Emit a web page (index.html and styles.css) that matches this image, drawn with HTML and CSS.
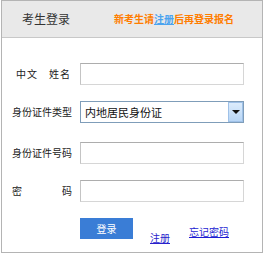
FILE: index.html
```html
<!DOCTYPE html>
<html lang="zh-CN">
<head>
<meta charset="utf-8">
<title>考生登录</title>
<link rel="stylesheet" href="styles.css">
</head>
<body>
<div class="login-box">
  <div class="login-head">
    <span class="login-title">考生登录</span>
    <span class="login-notice">新考生请<a class="notice-link" href="#">注册</a>后再登录报名</span>
  </div>
  <div class="login-form">
    <div class="form-row">
      <label class="form-label label-name">中文　姓名</label>
      <div class="text-input"></div>
    </div>
    <div class="form-row">
      <label class="form-label">身份证件类型</label>
      <div class="select-box">
        <span class="select-text">内地居民身份证</span>
        <span class="select-arrow"><span class="arrow-tri"></span></span>
      </div>
    </div>
    <div class="form-row row-id">
      <label class="form-label">身份证件号码</label>
      <div class="text-input"></div>
    </div>
    <div class="form-row">
      <label class="form-label label-pwd"><span>密</span><span>码</span></label>
      <div class="text-input"></div>
    </div>
    <div class="action-row">
      <button class="login-btn" type="button">登录</button>
      <a class="link link-reg" href="#">注册</a>
      <a class="link link-forget" href="#">忘记密码</a>
    </div>
  </div>
</div>
</body>
</html>
```
FILE: styles.css
```css
* { box-sizing: border-box; }
body {
  margin: 0;
  background: #fff;
  font-family: "Noto Sans CJK SC", "Noto Sans", sans-serif;
}
.login-box {
  margin-left: 1px;
  width: 262px;
  height: 253px;
  border: 1px solid #b4b4b4;
  background: #fff;
}
.login-head {
  height: 37px;
  background: #e9e9e9;
  border-bottom: 1px solid #c8c8c8;
  display: flex;
  align-items: center;
  padding-left: 20px;
}
.login-title {
  font-size: 12px;
  color: #333;
  width: 92px;
  line-height: 14px;
}
.login-notice {
  font-size: 10px;
  line-height: 12px;
  color: #ff7d00;
  font-weight: 700;
}
.notice-link {
  color: #4aa3ef;
  text-decoration: underline;
}
.login-form {
  padding-top: 25px;
  display: flex;
  flex-direction: column;
  gap: 16px;
}
.form-row {
  display: flex;
  align-items: center;
  height: 22px;
}
.row-id { margin-top: 3px; }
.form-label {
  width: 60px;
  margin-left: 10px;
  margin-right: 8px;
  font-size: 10px;
  line-height: 12px;
  color: #222;
  text-align: right;
  white-space: nowrap;
}
.label-name { letter-spacing: 1px; margin-left: 9px; margin-right: 9px; }
.label-pwd {
  display: flex;
  justify-content: space-between;
}
.text-input {
  width: 164px;
  height: 22px;
  border: 1px solid #d6d6d6;
  border-top-color: #adadad;
  border-left-color: #c4c4c4;
  background: #fff;
}
.select-box {
  width: 164px;
  height: 22px;
  border: 1px solid #7f9db9;
  display: flex;
  align-items: center;
  justify-content: space-between;
}
.select-text {
  padding-left: 4px;
  font-size: 11px;
  line-height: 14px;
  color: #111;
}
.select-arrow {
  width: 15px;
  height: 20px;
  border: 1px solid #9fc1e8;
  background: linear-gradient(#dcecfc, #b8d6f6);
  display: flex;
  align-items: center;
  justify-content: center;
}
.arrow-tri {
  width: 0;
  height: 0;
  border-left: 4px solid transparent;
  border-right: 4px solid transparent;
  border-top: 4px solid #111;
}
.action-row {
  display: flex;
  align-items: flex-start;
  padding-left: 78px;
}
.login-btn {
  width: 53px;
  height: 21px;
  border: 0;
  padding: 0;
  background: #3a7dd6;
  color: #fff;
  font-family: inherit;
  font-size: 10px;
  line-height: 12px;
}
.link {
  font-size: 10px;
  line-height: 12px;
  color: #1c1cd2;
  text-decoration: underline;
}
.link-reg { margin-left: 17px; margin-top: 14px; color: #2a1fcc; }
.link-forget { margin-left: 19px; margin-top: 8px; }
```
